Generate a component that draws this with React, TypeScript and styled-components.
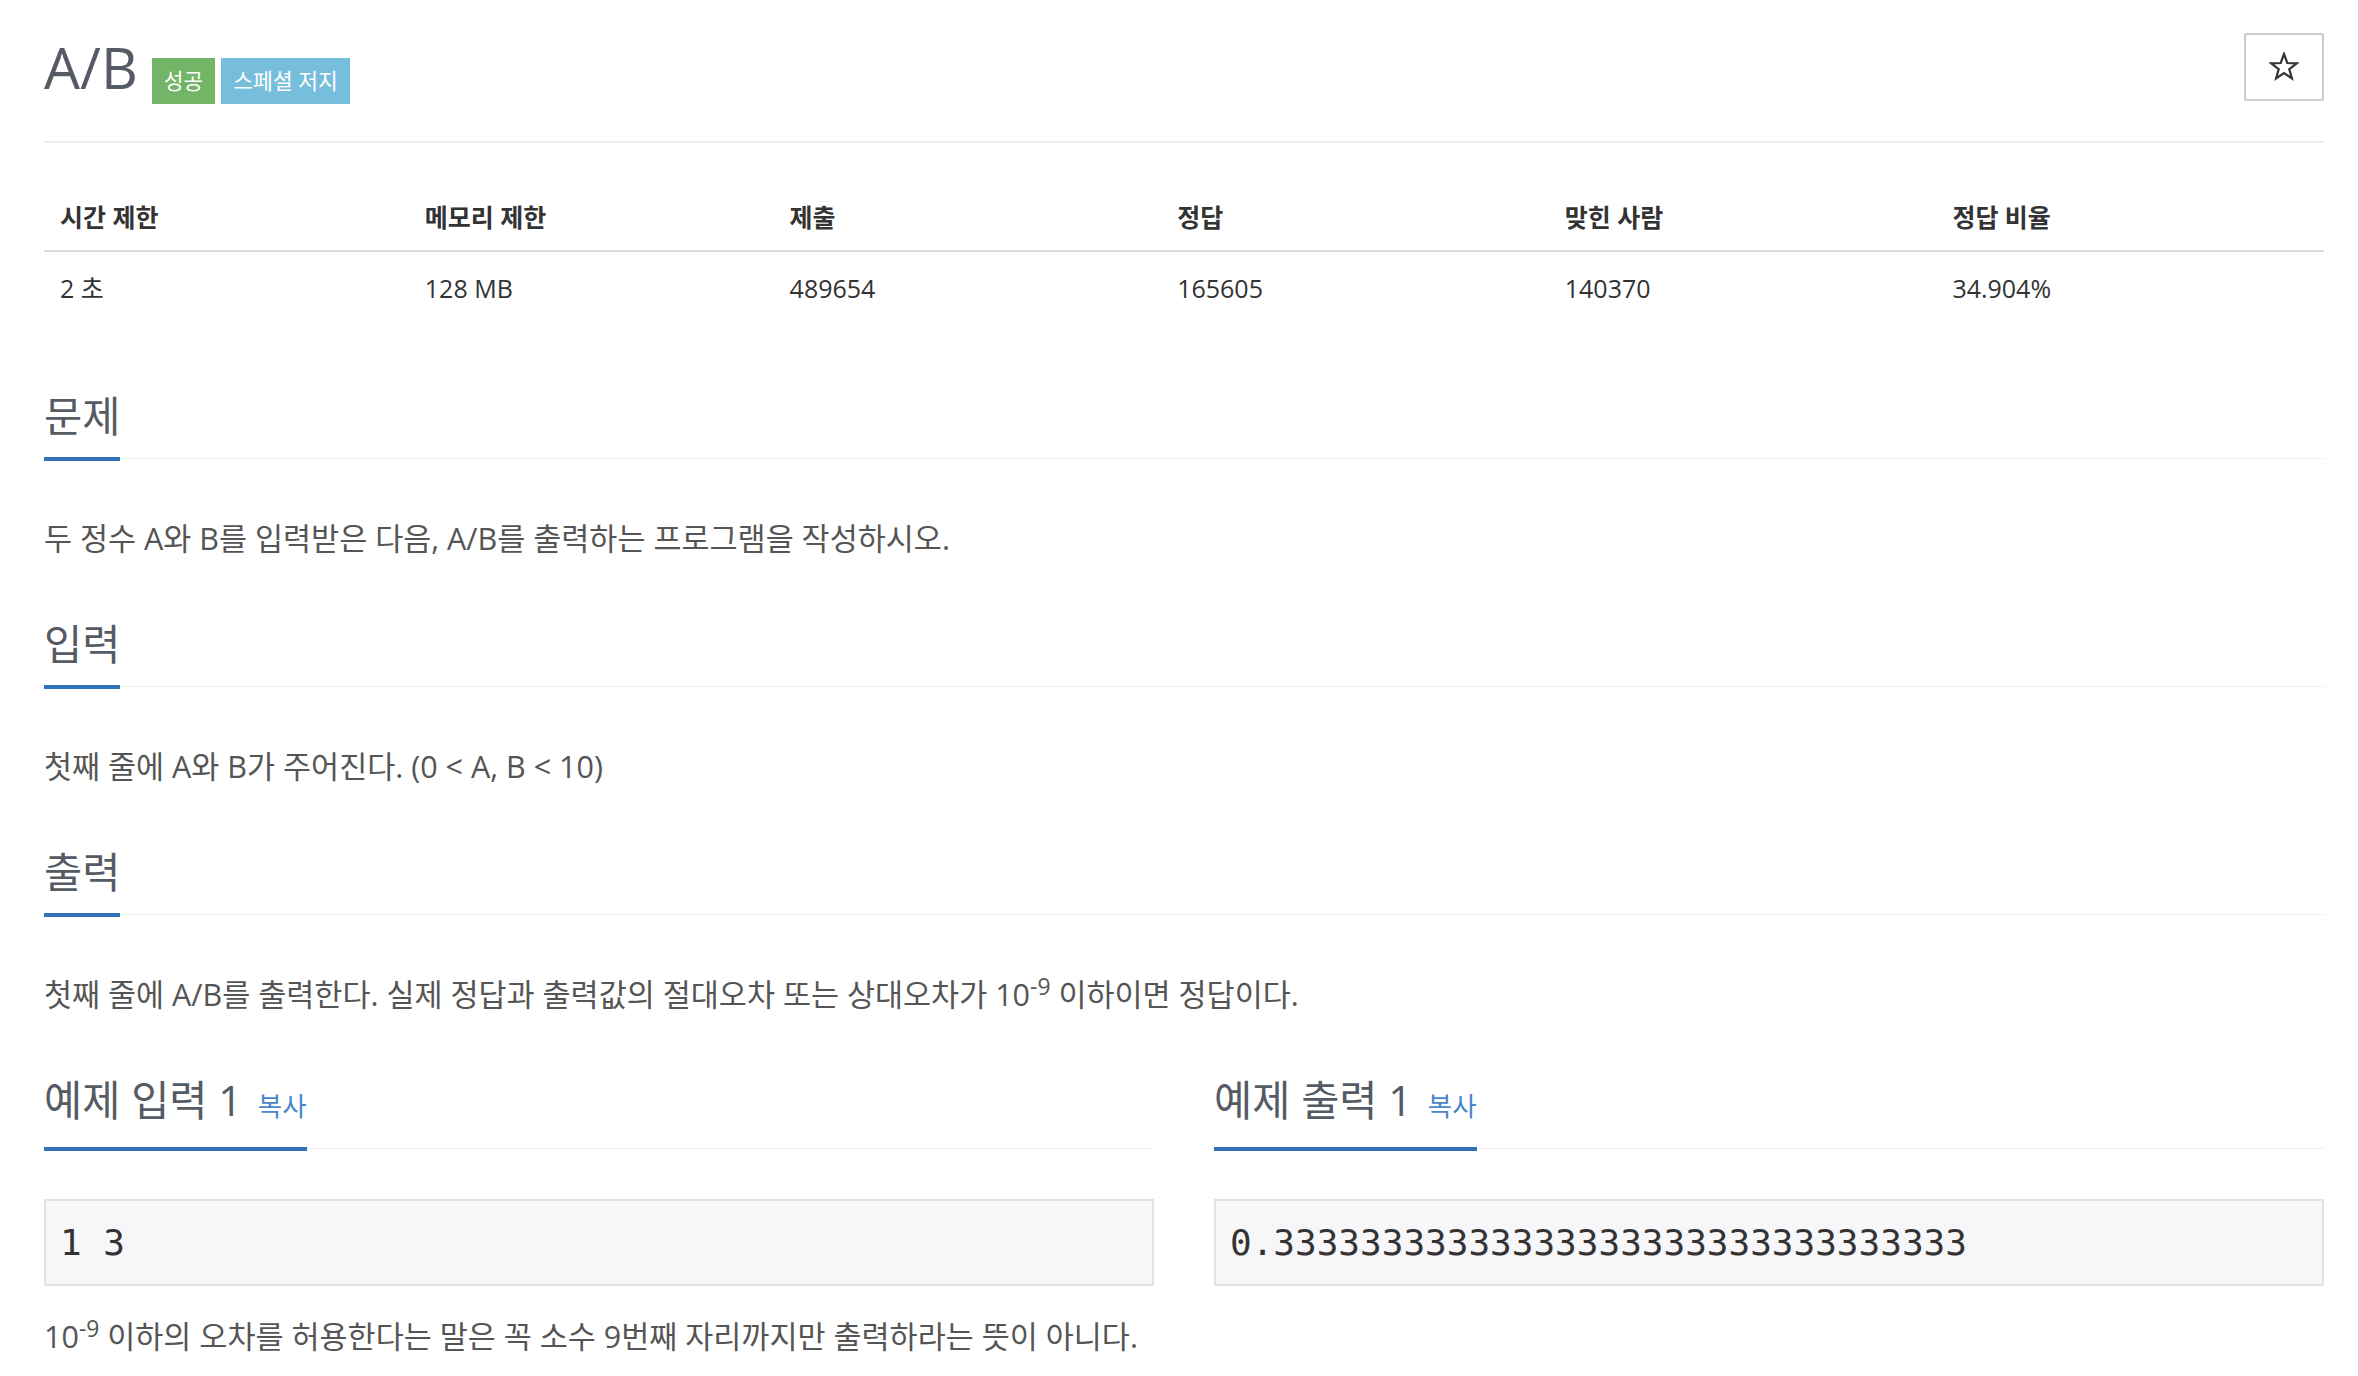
import React from 'react';
import styled, { createGlobalStyle } from 'styled-components';

const GlobalStyle = createGlobalStyle`
  html, body {
    margin: 0;
    padding: 0;
    background: #fff;
  }
  body {
    font-family: "Open Sans", "Noto Sans CJK KR", sans-serif;
    color: #555;
  }
`;

const Page = styled.div`
  width: 2280px;
  padding: 0 34px 0 44px;
`;

const TitleRow = styled.div`
  display: flex;
  justify-content: space-between;
  align-items: flex-start;
  height: 108px;
  padding-top: 33px;
  border-bottom: 2px solid #eee;
`;

const TitleLeft = styled.div`
  display: flex;
  align-items: baseline;
  gap: 6px;
  margin-top: 4px;
`;

const ProblemTitle = styled.h1`
  margin: 0 8px 0 0;
  font-size: 57px;
  line-height: 60px;
  font-weight: 400;
  color: #555b64;
`;

const Badge = styled.span<{ $color: string }>`
  display: inline-block;
  padding: 8px 12px;
  font-size: 21.5px;
  line-height: 30px;
  color: #fff;
  background: ${(p) => p.$color};
`;

const StarButton = styled.button`
  width: 80px;
  height: 68px;
  box-sizing: border-box;
  border: 2px solid #ccc;
  border-radius: 2px;
  background: #fff;
  display: flex;
  align-items: center;
  justify-content: center;
  padding: 0;
`;

const InfoTable = styled.table`
  width: 100%;
  border-collapse: collapse;
  margin: 42px 0 73px;
  font-size: 25px;
  color: #333;
`;

const Th = styled.th<{ $w: number }>`
  width: ${(p) => p.$w}%;
  text-align: left;
  font-weight: 700;
  padding: 16px 16px;
  line-height: 33px;
  border-bottom: 2px solid #ddd;
`;

const Td = styled.td`
  padding: 20px 16px 16px;
  line-height: 33px;
`;

const Section = styled.section`
  margin-top: 61px;
`;

const Headline = styled.div`
  display: flex;
  border-bottom: 1px dotted #ddd;
`;

const SectionTitle = styled.h2`
  margin: 0 0 -3px;
  padding-bottom: 18px;
  font-size: 41.5px;
  line-height: 45px;
  font-weight: 400;
  color: #555b64;
  border-bottom: 4px solid #3173b9;
`;

const CopyLink = styled.span`
  margin-left: 5px;
  font-size: 26.5px;
  color: #4a86c8;
`;

const Text = styled.p<{ $gap?: number }>`
  margin: ${(p) => p.$gap ?? 57}px 0 0;
  font-size: 30.5px;
  line-height: 45px;
  color: #555;

  sup {
    font-size: 75%;
    line-height: 0;
    vertical-align: super;
  }
`;

const SampleGrid = styled.div`
  display: grid;
  grid-template-columns: 1fr 1fr;
  column-gap: 60px;
  margin-top: 61px;
`;

const SampleData = styled.pre`
  margin: 50px 0 0;
  padding: 14px;
  border: 2px solid #e1e1e8;
  background: #f7f7f9;
  font-family: "DejaVu Sans Mono", "Liberation Mono", monospace;
  font-size: 36px;
  line-height: 55px;
  color: #333;
`;

const StarIcon = () => (
  <svg width="30" height="30" viewBox="0 0 30 30">
    <polygon
      points="15,2 18.3,11 27.8,11.3 20.3,17.2 22.9,26.4 15,21.1 7.1,26.4 9.7,17.2 2.2,11.3 11.7,11"
      fill="none"
      stroke="#333"
      strokeWidth="2.2"
      strokeLinejoin="miter"
    />
  </svg>
);

const columns = [
  { label: '시간 제한', value: '2 초', w: 16 },
  { label: '메모리 제한', value: '128 MB', w: 16 },
  { label: '제출', value: '489654', w: 17 },
  { label: '정답', value: '165605', w: 17 },
  { label: '맞힌 사람', value: '140370', w: 17 },
  { label: '정답 비율', value: '34.904%', w: 17 },
];

const App: React.FC = () => {
  return (
    <>
      <GlobalStyle />
      <Page>
        <TitleRow>
          <TitleLeft>
            <ProblemTitle>A/B</ProblemTitle>
            <Badge $color="#72b566">성공</Badge>
            <Badge $color="#77bedd">스페셜 저지</Badge>
          </TitleLeft>
          <StarButton>
            <StarIcon />
          </StarButton>
        </TitleRow>

        <InfoTable>
          <thead>
            <tr>
              {columns.map((c) => (
                <Th key={c.label} $w={c.w}>{c.label}</Th>
              ))}
            </tr>
          </thead>
          <tbody>
            <tr>
              {columns.map((c) => (
                <Td key={c.label}>{c.value}</Td>
              ))}
            </tr>
          </tbody>
        </InfoTable>

        <Section>
          <Headline>
            <SectionTitle>문제</SectionTitle>
          </Headline>
          <Text>두 정수 A와 B를 입력받은 다음, A/B를 출력하는 프로그램을 작성하시오.</Text>
        </Section>

        <Section>
          <Headline>
            <SectionTitle>입력</SectionTitle>
          </Headline>
          <Text>첫째 줄에 A와 B가 주어진다. (0 &lt; A, B &lt; 10)</Text>
        </Section>

        <Section>
          <Headline>
            <SectionTitle>출력</SectionTitle>
          </Headline>
          <Text>
            첫째 줄에 A/B를 출력한다. 실제 정답과 출력값의 절대오차 또는 상대오차가 10<sup>-9</sup> 이하이면 정답이다.
          </Text>
        </Section>

        <SampleGrid>
          <div>
            <Headline>
              <SectionTitle>
                예제 입력 1 <CopyLink>복사</CopyLink>
              </SectionTitle>
            </Headline>
            <SampleData>1 3</SampleData>
            <Text $gap={28}>
              10<sup>-9</sup> 이하의 오차를 허용한다는 말은 꼭 소수 9번째 자리까지만 출력하라는 뜻이 아니다.
            </Text>
          </div>
          <div>
            <Headline>
              <SectionTitle>
                예제 출력 1 <CopyLink>복사</CopyLink>
              </SectionTitle>
            </Headline>
            <SampleData>0.33333333333333333333333333333333</SampleData>
          </div>
        </SampleGrid>
      </Page>
    </>
  );
};

export default App;
